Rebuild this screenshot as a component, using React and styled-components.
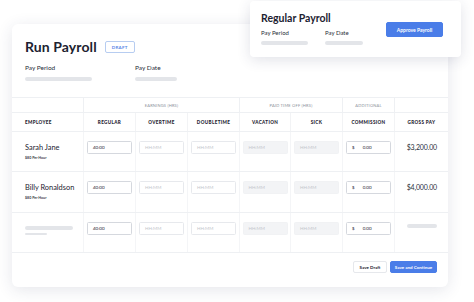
import React from 'react';
import styled, { createGlobalStyle } from 'styled-components';

const GlobalStyle = createGlobalStyle`
  body {
    margin: 0;
    background: #ffffff;
    font-family: Lato, "Noto Sans", sans-serif;
    color: #1d2230;
  }
`;

const COLS = '71px 52px 52px 52px 51px 52px 52px 54px';

const Page = styled.div`
  position: relative;
  width: 474px;
  height: 302px;
  overflow: hidden;
`;

const MainCard = styled.div`
  margin: 24px 0 0 12px;
  width: 436px;
  height: 263px;
  background: #fff;
  border-radius: 6px;
  box-shadow: 0 3px 16px rgba(40, 50, 90, 0.12);
  display: flex;
  flex-direction: column;
`;

const Header = styled.div`
  padding: 14px 13px 0;
  height: 73px;
  box-sizing: border-box;
`;

const TitleRow = styled.div`
  display: flex;
  align-items: center;
  gap: 8px;
`;

const Title = styled.h1`
  margin: 0;
  font-size: 14px;
  font-weight: 700;
  line-height: 18px;
  letter-spacing: 0.1px;
`;

const Badge = styled.span`
  width: 30px;
  height: 12px;
  box-sizing: border-box;
  border: 1px solid #b7cdf1;
  border-radius: 2px;
  color: #5a88e6;
  font-size: 4.5px;
  font-weight: 700;
  letter-spacing: 0.3px;
  display: flex;
  align-items: center;
  justify-content: center;
`;

const MetaRow = styled.div`
  display: flex;
  margin-top: ${p => (p.$top != null ? p.$top : 8)}px;
`;

const Meta = styled.div`
  width: ${p => p.$w}px;
  display: flex;
  flex-direction: column;
  gap: ${p => p.$gap || 5}px;
`;

const MetaLabel = styled.span`
  font-size: ${p => p.$size || 6.5}px;
  color: #2a2f3b;
  line-height: 8px;
`;

const Skeleton = styled.div`
  width: ${p => p.$w}px;
  height: ${p => p.$h || 4}px;
  border-radius: 3px;
  background: #e3e5e9;
`;

const Row = styled.div`
  display: grid;
  grid-template-columns: ${COLS};
  height: ${p => p.$h}px;
  border-top: 1px solid #eef0f3;
  box-sizing: border-box;
`;

const GroupCell = styled.div`
  grid-column: span ${p => p.$span || 1};
  border-left: ${p => (p.$first ? 'none' : '1px solid #eef0f3')};
  display: flex;
  align-items: center;
  justify-content: center;
  font-size: 4px;
  color: #8b909a;
  letter-spacing: 0.2px;
`;

const HeadCell = styled.div`
  border-left: ${p => (p.$first ? 'none' : '1px solid #f2f3f5')};
  display: flex;
  align-items: center;
  justify-content: ${p => (p.$first ? 'flex-start' : 'center')};
  padding-left: ${p => (p.$first ? 13 : 0)}px;
  font-size: 4.6px;
  font-weight: 900;
  color: #1d2230;
  letter-spacing: 0.35px;
`;

const Cell = styled.div`
  border-left: ${p => (p.$first ? 'none' : '1px solid #f4f5f7')};
  display: flex;
  align-items: flex-start;
  justify-content: ${p => p.$justify || 'center'};
  padding: ${p => p.$pad || '9px 0 0'};
`;

const EmpCell = styled.div`
  display: flex;
  flex-direction: column;
  padding: ${p => p.$top || 11}px 0 0 13px;
  gap: ${p => p.$gap || 1.5}px;
`;

const EmpName = styled.span`
  font-size: 7.4px;
  line-height: 10px;
  font-weight: 400;
  color: #1d2230;
  white-space: nowrap;
`;

const EmpRate = styled.span`
  font-size: 3.6px;
  line-height: 5px;
  font-weight: 700;
  color: #3a3f4b;
`;

const Input = styled.div`
  width: 45px;
  height: 13px;
  box-sizing: border-box;
  border-radius: 1.5px;
  border: 1px solid ${p => (p.$filled ? '#d5d8de' : p.$gray ? '#f1f2f4' : '#e7e9ed')};
  background: ${p => (p.$gray ? '#f3f4f6' : '#fff')};
  display: flex;
  align-items: center;
  padding-left: 5px;
  gap: 8px;
  font-size: 4.5px;
  color: ${p => (p.$filled ? '#1d2230' : '#c3c6cc')};
`;

const Money = styled.span`
  font-size: 7px;
  line-height: 10px;
  color: #2a2f3b;
  letter-spacing: -0.15px;
`;

const Footer = styled.div`
  flex: 1;
  border-top: 1px solid #eef0f3;
  display: flex;
  justify-content: flex-end;
  align-items: flex-start;
  gap: 3px;
  padding: 8px 11px 0 0;
`;

const Button = styled.button`
  height: ${p => p.$h || 12}px;
  width: ${p => p.$w}px;
  padding: 0;
  border-radius: 2px;
  border: 1px solid ${p => (p.$primary ? '#4a7de8' : '#e6e8ec')};
  background: ${p => (p.$primary ? '#4a7de8' : '#fff')};
  color: ${p => (p.$primary ? '#fff' : '#1d2230')};
  font-family: inherit;
  font-size: ${p => p.$size || 4.5}px;
  font-weight: 700;
  display: flex;
  align-items: center;
  justify-content: center;
  white-space: nowrap;
`;

const Popup = styled.div`
  position: absolute;
  left: 250px;
  top: 1px;
  width: 211px;
  height: 56px;
  background: #fff;
  border-radius: 4px;
  box-shadow: 0 3px 14px rgba(40, 50, 90, 0.14);
  padding: 11px 18px 0 11px;
  box-sizing: border-box;
  display: flex;
  justify-content: space-between;
`;

const PopupTitle = styled.div`
  font-size: 10.5px;
  font-weight: 700;
  line-height: 12px;
  margin-bottom: 5px;
`;

const PopupButtonWrap = styled.div`
  padding-top: 10px;
`;

const rows = [
  { name: 'Sarah Jane', pay: '$3,200.00', h: 40 },
  { name: 'Billy Ronaldson', pay: '$4,000.00', h: 41 },
];

const RowInputs = () => (
  <>
    <Cell><Input $filled>40:00</Input></Cell>
    <Cell><Input>HH:MM</Input></Cell>
    <Cell><Input>HH:MM</Input></Cell>
    <Cell><Input $gray>HH:MM</Input></Cell>
    <Cell><Input $gray>HH:MM</Input></Cell>
    <Cell><Input $filled><span>$</span><span>0.00</span></Input></Cell>
  </>
);

const App = () => {
  return (
    <Page>
      <GlobalStyle />
      <MainCard>
        <Header>
          <TitleRow>
            <Title>Run Payroll</Title>
            <Badge>DRAFT</Badge>
          </TitleRow>
          <MetaRow>
            <Meta $w={110}>
              <MetaLabel>Pay Period</MetaLabel>
              <Skeleton $w={67} />
            </Meta>
            <Meta $w={60}>
              <MetaLabel>Pay Date</MetaLabel>
              <Skeleton $w={42} />
            </Meta>
          </MetaRow>
        </Header>

        <Row $h={15}>
          <GroupCell $first />
          <GroupCell $span={3}>EARNINGS (HRS)</GroupCell>
          <GroupCell $span={2}>PAID TIME OFF (HRS)</GroupCell>
          <GroupCell>ADDITIONAL</GroupCell>
          <GroupCell />
        </Row>
        <Row $h={19}>
          <HeadCell $first>EMPLOYEE</HeadCell>
          <HeadCell>REGULAR</HeadCell>
          <HeadCell>OVERTIME</HeadCell>
          <HeadCell>DOUBLETIME</HeadCell>
          <HeadCell>VACATION</HeadCell>
          <HeadCell>SICK</HeadCell>
          <HeadCell>COMMISSION</HeadCell>
          <HeadCell>GROSS PAY</HeadCell>
        </Row>

        {rows.map(r => (
          <Row $h={r.h} key={r.name}>
            <EmpCell>
              <EmpName>{r.name}</EmpName>
              <EmpRate>$80 Per Hour</EmpRate>
            </EmpCell>
            <RowInputs />
            <Cell $justify="flex-end" $pad="10px 11px 0 0">
              <Money>{r.pay}</Money>
            </Cell>
          </Row>
        ))}

        <Row $h={40}>
          <EmpCell $top={13} $gap={3}>
            <Skeleton $w={48} $h={4} />
            <Skeleton $w={22} $h={1.5} />
          </EmpCell>
          <RowInputs />
          <Cell $justify="flex-end" $pad="11px 11px 0 0">
            <Skeleton $w={30} $h={4} />
          </Cell>
        </Row>

        <Footer>
          <Button $w={34}>Save Draft</Button>
          <Button $w={47} $primary>Save and Continue</Button>
        </Footer>
      </MainCard>

      <Popup>
        <div>
          <PopupTitle>Regular Payroll</PopupTitle>
          <MetaRow $top={0}>
            <Meta $w={64} $gap={4}>
              <MetaLabel $size={6}>Pay Period</MetaLabel>
              <Skeleton $w={47} $h={3.5} />
            </Meta>
            <Meta $w={50} $gap={4}>
              <MetaLabel $size={6}>Pay Date</MetaLabel>
              <Skeleton $w={38} $h={3.5} />
            </Meta>
          </MetaRow>
        </div>
        <PopupButtonWrap>
          <Button $w={57} $h={15} $size={5} $primary>Approve Payroll</Button>
        </PopupButtonWrap>
      </Popup>
    </Page>
  );
};

export default App;
